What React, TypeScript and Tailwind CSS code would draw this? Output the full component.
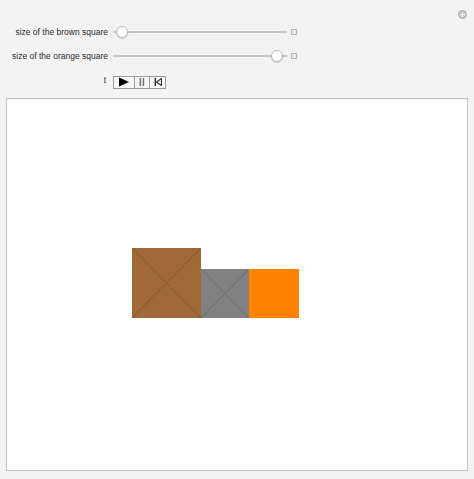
import React from "react";

function Slider({ pos }: { pos: number }) {
  return (
    <div className="flex items-center">
      <div className="relative w-[174px] h-[14px] flex items-center">
        <div className="w-full h-[2px] bg-[#c4c4c4] rounded-full" />
        <div
          className="absolute top-[1px] w-[12px] h-[12px] rounded-full bg-white border border-[#b8b8b8] shadow-[0_1px_1px_rgba(0,0,0,0.15)]"
          style={{ left: pos - 6 }}
        />
      </div>
      <div className="ml-[4px] w-[6px] h-[6px] border border-[#b8b8b8] bg-[#ececec]" />
    </div>
  );
}

export default function App() {
  const font = { fontFamily: '"Liberation Sans", Arial, sans-serif' };
  return (
    <div className="w-[474px] h-[479px] bg-[#f3f3f3] flex flex-col" style={font}>
      <div className="h-[25px] flex justify-end items-start pr-[7px] pt-[10px]">
        <svg width="9" height="9" viewBox="0 0 9 9">
          <circle cx="4.5" cy="4.5" r="4.5" fill="#b9b9b9" />
          <path d="M4.5 2v5M2 4.5h5" stroke="#fff" strokeWidth="1.3" />
        </svg>
      </div>
      <div className="flex items-center h-[14px]">
        <div className="w-[108px] text-right text-[8.5px] text-[#2a2a2a] leading-none">size of the brown square</div>
        <div className="ml-[5px]">
          <Slider pos={9} />
        </div>
      </div>
      <div className="flex items-center h-[14px] mt-[10px]">
        <div className="w-[108px] text-right text-[8.5px] text-[#2a2a2a] leading-none">size of the orange square</div>
        <div className="ml-[5px]">
          <Slider pos={164} />
        </div>
      </div>
      <div className="flex items-center h-[14px] mt-[12px]">
        <div className="w-[106px] text-right text-[8.5px] text-[#2a2a2a] leading-none pb-[4px]">t</div>
        <div className="ml-[7px] flex h-[13px] border border-[#9a9a9a] bg-[#f7f7f7]">
          <div className="w-[21px] flex items-center justify-center border-r border-[#9a9a9a]">
            <svg width="12" height="10" viewBox="0 0 12 10">
              <path d="M1 0.5L11 5L1 9.5Z" fill="#000" />
            </svg>
          </div>
          <div className="w-[15px] flex items-center justify-center border-r border-[#9a9a9a]">
            <svg width="6" height="8" viewBox="0 0 6 8">
              <rect x="0.5" y="0" width="1.6" height="8" fill="#777" />
              <rect x="3.6" y="0" width="1.6" height="8" fill="#777" />
            </svg>
          </div>
          <div className="w-[15px] flex items-center justify-center">
            <svg width="8" height="8" viewBox="0 0 8 8">
              <rect x="0.5" y="0" width="1.5" height="8" fill="#333" />
              <path d="M7.5 0.5L2.5 4L7.5 7.5Z" fill="none" stroke="#333" strokeWidth="1.2" />
            </svg>
          </div>
        </div>
      </div>
      <div className="mt-[9px] ml-[6px] w-[462px] h-[373px] bg-white border border-[#c6c6c6] shadow-[inset_0_1px_1px_rgba(0,0,0,0.06)]">
        <svg width="460" height="371" viewBox="0 0 460 371">
          <rect x="125" y="149" width="69" height="70" fill="#a06a38" />
          <path d="M125 149L194 219M194 149L125 219" stroke="#7e5229" strokeWidth="0.8" />
          <rect x="194" y="170" width="48" height="49" fill="#818181" />
          <path d="M194 170L242 219M242 170L194 219" stroke="#676767" strokeWidth="0.8" />
          <rect x="242" y="170" width="50" height="49" fill="#ff8200" />
        </svg>
      </div>
    </div>
  );
}
